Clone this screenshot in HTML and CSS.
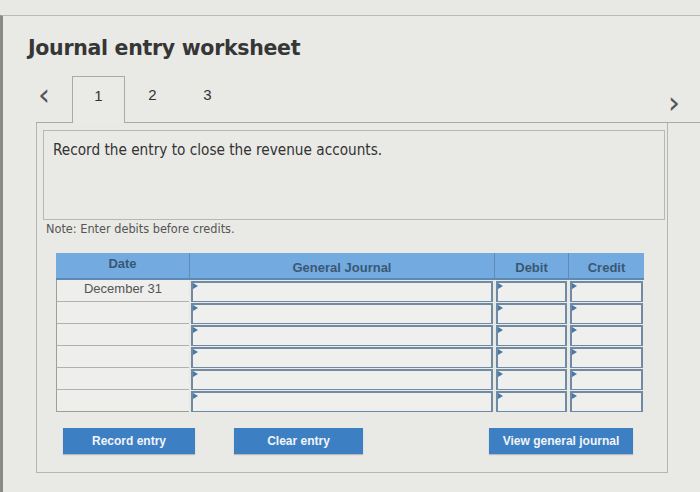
FILE: index.html
```html
<!DOCTYPE html>
<html>
<head>
<meta charset="utf-8">
<link rel="stylesheet" href="styles.css">
</head>
<body>
<div class="screen">
  <h1 class="title">Journal entry worksheet</h1>
  <div class="tabs">
    <span class="chev chev-left">&lsaquo;</span>
    <span class="tab active">1</span>
    <span class="tab">2</span>
    <span class="tab">3</span>
    <span class="chev chev-right">&rsaquo;</span>
  </div>
  <div class="panel">
    <div class="prompt">Record the entry to close the revenue accounts.</div>
    <div class="note">Note: Enter debits before credits.</div>
    <div class="journal">
      <div class="hd hd-date">Date</div>
      <div class="hd">General Journal</div>
      <div class="hd">Debit</div>
      <div class="hd">Credit</div>

      <div class="date">December 31</div>
      <div class="cell"><div class="inp"></div></div>
      <div class="cell"><div class="inp"></div></div>
      <div class="cell"><div class="inp"></div></div>

      <div class="date"></div>
      <div class="cell"><div class="inp"></div></div>
      <div class="cell"><div class="inp"></div></div>
      <div class="cell"><div class="inp"></div></div>

      <div class="date"></div>
      <div class="cell"><div class="inp"></div></div>
      <div class="cell"><div class="inp"></div></div>
      <div class="cell"><div class="inp"></div></div>

      <div class="date"></div>
      <div class="cell"><div class="inp"></div></div>
      <div class="cell"><div class="inp"></div></div>
      <div class="cell"><div class="inp"></div></div>

      <div class="date"></div>
      <div class="cell"><div class="inp"></div></div>
      <div class="cell"><div class="inp"></div></div>
      <div class="cell"><div class="inp"></div></div>

      <div class="date last"></div>
      <div class="cell"><div class="inp"></div></div>
      <div class="cell"><div class="inp"></div></div>
      <div class="cell"><div class="inp"></div></div>
    </div>
    <div class="buttons">
      <button class="btn btn-record">Record entry</button>
      <button class="btn btn-clear">Clear entry</button>
      <button class="btn btn-view">View general journal</button>
    </div>
  </div>
</div>
</body>
</html>
```
FILE: styles.css
```css
html, body {
  margin: 0;
  padding: 0;
  background: #e8e8e5;
}
.screen {
  width: 700px;
  height: 492px;
  box-sizing: border-box;
  margin-top: 15px;
  border-top: 1px solid #b9b9b6;
  border-left: 3px solid #8a8a88;
  background: #e9e9e6;
  font-family: "DejaVu Sans", Verdana, sans-serif;
  color: #333;
}
.title {
  margin: 0;
  padding: 20px 0 0 25px;
  height: 40px;
  font-size: 20.5px;
  line-height: 24px;
  font-weight: bold;
  color: #363636;
  letter-spacing: -0.3px;
}
.tabs {
  margin-left: 33px;
  height: 46px;
  display: flex;
  align-items: flex-start;
  border-bottom: 1px solid #a9a9a6;
}
.chev {
  font-family: "DejaVu Sans", sans-serif;
  font-size: 30px;
  line-height: 30px;
  color: #555;
}
.chev-left {
  margin: 4px 0 0 2px;
  width: 34px;
}
.chev-right {
  margin: 12px 0 0 auto;
  width: 32px;
}
.tab {
  width: 53px;
  height: 46px;
  box-sizing: border-box;
  text-align: center;
  font-family: "Liberation Sans", Arial, sans-serif;
  font-size: 15px;
  line-height: 38px;
  color: #333;
}
.tab.active {
  border: 1px solid #a9a9a6;
  border-bottom: none;
  height: 47px;
  margin-bottom: -1px;
  background: #eaeae7;
}
.tab + .tab:not(.active) {
  width: 55px;
}
.panel {
  margin-left: 33px;
  width: 632px;
  height: 350px;
  box-sizing: border-box;
  border-left: 1px solid #b5b5b2;
  border-right: 1px solid #b5b5b2;
  border-bottom: 1px solid #b5b5b2;
  padding: 7px 0 0 6px;
}
.prompt {
  width: 622px;
  height: 90px;
  box-sizing: border-box;
  border: 1px solid #b7b7b4;
  padding: 10px 0 0 9px;
  font-family: "DejaVu Sans Condensed", "DejaVu Sans", sans-serif;
  font-size: 15.2px;
  line-height: 18px;
  color: #333;
}
.note {
  margin: 1px 0 0 3px;
  font-family: "DejaVu Sans Condensed", "DejaVu Sans", sans-serif;
  font-size: 12.6px;
  line-height: 16px;
  color: #555;
}
.journal {
  margin: 16px 0 0 13px;
  display: grid;
  grid-template-columns: 133px 305px 74px 76px;
  grid-auto-rows: 22px;
  grid-template-rows: 27px;
  width: 588px;
  font-family: "Liberation Sans", Arial, sans-serif;
}
.hd {
  background: #73abe0;
  border-left: 1px solid #5e8cb8;
  border-bottom: 2px solid #5c8ab4;
  text-align: center;
  font-size: 13px;
  font-weight: bold;
  line-height: 30px;
  color: #3a5874;
  box-sizing: border-box;
}
.hd-date {
  border-left: none;
  line-height: 22px;
}
.date {
  border-left: 1px solid #9d9d9a;
  border-bottom: 1px solid #b0b0ad;
  box-sizing: border-box;
  text-align: center;
  font-size: 13px;
  line-height: 18px;
  color: #555;
  background: #eeeeec;
}
.date.last {
  border-bottom: 1px solid #9d9d9a;
}
.cell {
  box-sizing: border-box;
  padding: 1px 1px 0 2px;
}
.inp {
  position: relative;
  height: 21px;
  box-sizing: border-box;
  border: 2px solid #6f8aa2;
  border-bottom-width: 1px;
  background: #efefed;
}
.inp::before {
  content: "";
  position: absolute;
  left: 0;
  top: 0;
  border-top: 3px solid transparent;
  border-bottom: 3px solid transparent;
  border-left: 5px solid #4a79a8;
}
.buttons {
  display: flex;
  margin: 16px 0 0 20px;
}
.btn {
  height: 26px;
  border: none;
  background: #3d7fc3;
  color: #f1f4f8;
  font-family: "Liberation Sans", Arial, sans-serif;
  font-size: 12px;
  font-weight: bold;
  padding: 0;
  box-shadow: 0 1px 1px rgba(0,0,0,0.2);
}
.btn-record {
  width: 132px;
}
.btn-clear {
  width: 129px;
  margin-left: 39px;
}
.btn-view {
  width: 144px;
  margin-left: 126px;
}
```
